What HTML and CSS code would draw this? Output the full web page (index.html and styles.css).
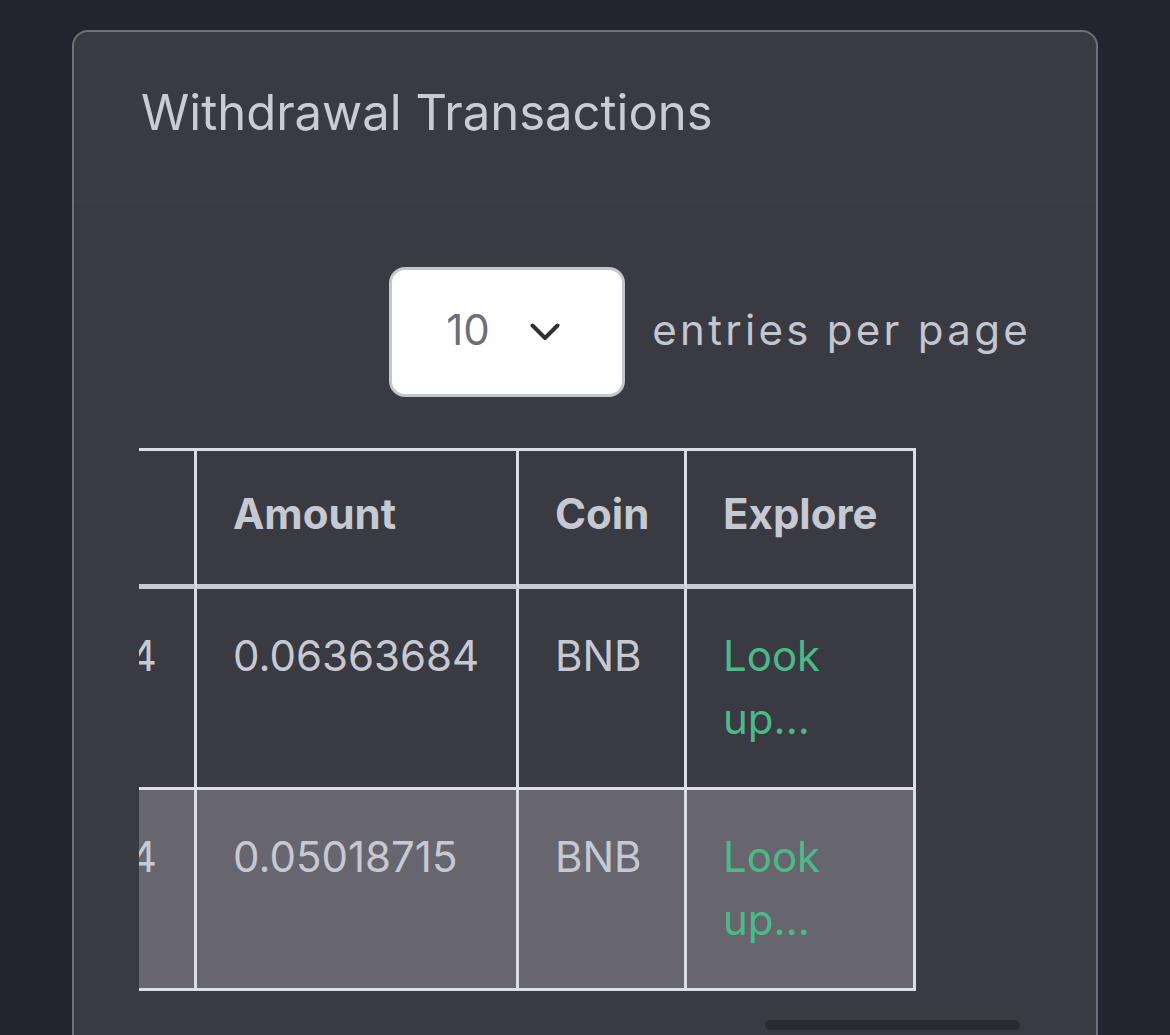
FILE: index.html
```html
<!DOCTYPE html>
<html lang="en">
<head>
<meta charset="utf-8">
<title>Withdrawal Transactions</title>
<link rel="stylesheet" href="styles.css">
</head>
<body>
<div class="page">
  <section class="card">
    <header class="card-header">
      <h2 class="card-title">Withdrawal Transactions</h2>
    </header>
    <div class="card-body">
      <div class="entries-row">
        <div class="select">
          <span class="select-value">10</span>
          <svg class="chevron" width="30" height="18" viewBox="0 0 30 18" aria-hidden="true">
            <path d="M2.5 2.5 L15 15 L27.5 2.5" fill="none" stroke="#2f3038" stroke-width="4" stroke-linecap="round" stroke-linejoin="round"/>
          </svg>
        </div>
        <span class="entries-label">entries per page</span>
      </div>
      <div class="table-wrap">
        <table class="tx-table">
          <colgroup>
            <col class="w-date">
            <col class="w-amount">
            <col class="w-coin">
            <col class="w-explore">
          </colgroup>
          <thead>
            <tr>
              <th>Date</th>
              <th>Amount</th>
              <th>Coin</th>
              <th>Explore</th>
            </tr>
          </thead>
          <tbody>
            <tr>
              <td class="cell-date">2024-03-14</td>
              <td>0.06363684</td>
              <td>BNB</td>
              <td><a class="lookup" href="#">Look up...</a></td>
            </tr>
            <tr class="row-alt">
              <td class="cell-date">2024-03-04</td>
              <td>0.05018715</td>
              <td>BNB</td>
              <td><a class="lookup" href="#">Look up...</a></td>
            </tr>
          </tbody>
        </table>
      </div>
    </div>
    <div class="scroll-indicator"></div>
  </section>
</div>
</body>
</html>
```

FILE: styles.css
```css
html, body {
  margin: 0;
  padding: 0;
  background: #22252f;
  font-family: "Inter", "Lato", "Liberation Sans", sans-serif;
  color: #c6c9d2;
}

.page {
  padding: 30px 72px 0 72px;
  height: 1035px;
  box-sizing: border-box;
  overflow: hidden;
}

.card {
  position: relative;
  background: #3a3a43;
  border: 2px solid #6f7078;
  border-radius: 16px;
  min-height: 1100px;
}

.card-header {
  padding: 51px 65px 0 67px;
  height: 170px;
  box-sizing: border-box;
  border-bottom: 1px solid #3e3e48;
}

.card-title {
  margin: 0;
  font-size: 49px;
  font-weight: 400;
  line-height: 59px;
  color: #c9ccd5;
}

.card-body {
  padding: 65px 65px 0 65px;
}

.entries-row {
  display: flex;
  justify-content: flex-end;
  align-items: center;
  gap: 27px;
}

.select {
  width: 236px;
  height: 130px;
  box-sizing: border-box;
  background: #ffffff;
  border: 3px solid #c4c6cf;
  border-radius: 16px;
  display: flex;
  align-items: center;
  padding-left: 54px;
  gap: 40px;
}

.select-value {
  font-size: 42px;
  color: #6d6e77;
  padding-bottom: 5px;
}

.chevron {
  display: block;
}

.entries-label {
  font-size: 42px;
  letter-spacing: 3.3px;
  color: #c3c6cf;
  padding-bottom: 6px;
}

.table-wrap {
  margin-top: 51px;
  overflow: hidden;
  height: 560px;
}

.tx-table {
  table-layout: fixed;
  width: 1025px;
  border-collapse: separate;
  border-spacing: 0;
  border-top: 3px solid #dcdee6;
  border-left: 3px solid #dcdee6;
  margin-left: -248px;
  font-size: 42px;
  color: #c6c9d2;
}

.w-date { width: 303px; }
.w-amount { width: 322px; }
.w-coin { width: 168px; }
.w-explore { width: 229px; }

.tx-table th,
.tx-table td {
  border-right: 3px solid #dcdee6;
  border-bottom: 3px solid #dcdee6;
  text-align: left;
  padding-left: 36px;
  padding-right: 36px;
}

.tx-table th {
  font-weight: 700;
  padding-top: 33px;
  padding-bottom: 40px;
  line-height: 60px;
  vertical-align: top;
  border-bottom: 5px solid #c9cbd4;
}

.tx-table td {
  padding-top: 35px;
  padding-bottom: 37px;
  line-height: 63px;
  vertical-align: top;
  height: 126px;
}

.tx-table td.cell-date {
  text-align: right;
  white-space: nowrap;
  padding-left: 0;
  padding-right: 37px;
}

.row-alt td {
  background: #67666f;
}

.lookup {
  color: #4cb98b;
  text-decoration: none;
}

.scroll-indicator {
  position: absolute;
  left: 691px;
  top: 988px;
  width: 255px;
  height: 10px;
  border-radius: 5px;
  background: #2a2b31;
}
```
